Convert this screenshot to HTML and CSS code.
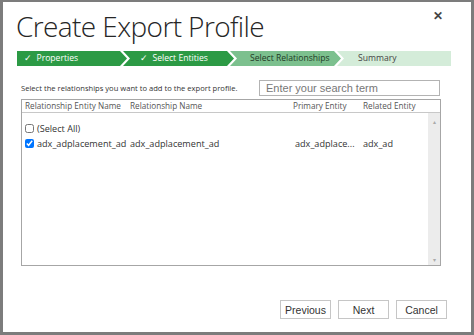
FILE: index.html
```html
<!DOCTYPE html>
<html lang="en">
<head>
    <meta charset="UTF-8">
    <title>Create Export Profile</title>
    <link rel="stylesheet" href="styles.css">
</head>
<body>
    <div class="dialog">
        <div class="header">
            <h1>Create Export Profile</h1>
            <span class="close">&#x2715;</span>
        </div>

        <!-- wizard steps -->
        <div class="steps">
            <div class="step done first">&#x2713;&nbsp; Properties</div>
            <div class="step done">&#x2713;&nbsp; Select Entities</div>
            <div class="step current">Select Relationships</div>
            <div class="step todo last">Summary</div>
        </div>

        <div class="toolbar">
            <p class="hint">Select the relationships you want to add to the export profile.</p>
            <input class="search" type="text" placeholder="Enter your search term">
        </div>

        <div class="grid">
            <div class="grid-head">
                <span class="col c1">Relationship Entity Name</span>
                <span class="col c2">Relationship Name</span>
                <span class="col c3">Primary Entity</span>
                <span class="col c4">Related Entity</span>
            </div>
            <div class="grid-body">
                <div class="rows">
                    <label class="row">
                        <input type="checkbox">
                        <span class="col">(Select All)</span>
                    </label>
                    <label class="row">
                        <input type="checkbox" checked>
                        <span class="col c1">adx_adplacement_ad</span>
                        <span class="col c2">adx_adplacement_ad</span>
                        <span class="col c3">adx_adplace...</span>
                        <span class="col c4">adx_ad</span>
                    </label>
                </div>
                <div class="scrollbar">
                    <span class="arrow">&#x25B4;</span>
                    <span class="arrow">&#x25BE;</span>
                </div>
            </div>
        </div>

        <div class="buttons">
            <button>Previous</button>
            <button>Next</button>
            <button>Cancel</button>
        </div>
    </div>
</body>
</html>
```

FILE: styles.css
```css
* {
    box-sizing: border-box;
}

body {
    margin: 0;
    padding: 0;
    font-family: "Open Sans", "Noto Sans", sans-serif;
    color: #333;
}

.dialog {
    width: 474px;
    height: 335px;
    background-color: #fff;
    border: 3px solid #7c7c7c;
    border-top-width: 2px;
    display: flex;
    flex-direction: column;
}

/* title */
.header {
    display: flex;
    justify-content: space-between;
    align-items: flex-start;
    padding: 0 28px 0 13px;
}

.header h1 {
    margin: 4px 0 0 0;
    font-size: 28px;
    line-height: 40px;
    font-weight: 300;
    color: #262626;
    letter-spacing: -0.6px;
}

.close {
    margin-top: 5px;
    font-size: 12px;
    font-weight: bold;
    color: #444;
}

/* wizard steps */
.steps {
    display: flex;
    margin: 5px 0 0 14px;
    width: 434px;
    height: 15px;
}

.step {
    height: 15px;
    line-height: 15px;
    font-size: 8.6px;
    color: #fff;
    padding-left: 17px;
    margin-left: -4px;
    white-space: nowrap;
    clip-path: polygon(0 0, calc(100% - 7px) 0, 100% 50%, calc(100% - 7px) 100%, 0 100%, 7px 50%);
}

.step.first {
    margin-left: 0;
    padding-left: 7px;
    width: 110px;
    clip-path: polygon(0 0, calc(100% - 7px) 0, 100% 50%, calc(100% - 7px) 100%, 0 100%);
}

.step.done {
    background-color: #2c9a45;
}

.step.done:nth-child(2) {
    width: 111px;
}

.step.current {
    width: 111px;
    padding-left: 20px;
    background-color: #7cc08e;
    color: #1f3a26;
}

.step.todo {
    flex: 1;
    padding-left: 21px;
    background-color: #d4ecd9;
    color: #444;
    clip-path: polygon(0 0, 100% 0, 100% 100%, 0 100%, 7px 50%);
}

/* hint + search */
.toolbar {
    display: flex;
    justify-content: space-between;
    align-items: center;
    margin: 14px 31px 0 18px;
}

.hint {
    margin: 0;
    font-size: 7.6px;
    color: #333;
}

.search {
    width: 181px;
    height: 16px;
    border: 1px solid #b3b3b3;
    padding: 0 6px;
    font-family: "Liberation Sans", Arial, sans-serif;
    font-size: 11px;
}

.search::placeholder {
    color: #777;
}

/* grid */
.grid {
    margin: 3px 30px 0 18px;
    height: 167px;
    border: 1px solid #a6a6a6;
    display: flex;
    flex-direction: column;
}

.grid-head {
    display: flex;
    height: 13px;
    line-height: 12px;
    font-size: 8.2px;
    color: #555;
    border-bottom: 1px solid #c8c8c8;
    padding-left: 3px;
}

.col {
    white-space: nowrap;
}

.c1 {
    width: 105px;
}

.c2 {
    width: 163px;
}

.c3 {
    width: 70px;
}

.grid-body {
    flex: 1;
    display: flex;
}

.rows {
    flex: 1;
    padding-top: 9px;
}

.row {
    display: flex;
    align-items: center;
    height: 13px;
    margin-bottom: 2px;
    font-size: 9.1px;
    color: #333;
    padding-left: 3px;
}

.row input {
    width: 9px;
    height: 9px;
    margin: 0 3px 0 0;
}

.row .c1 {
    width: 93px;
}

.row .c2 {
    width: 165px;
}

.row .c3 {
    width: 68px;
}

.scrollbar {
    width: 12px;
    background-color: #ececec;
    display: flex;
    flex-direction: column;
    justify-content: space-between;
    align-items: center;
    padding: 5px 0 1px;
}

.arrow {
    font-size: 6px;
    color: #aaa;
}

/* buttons */
.buttons {
    display: flex;
    justify-content: flex-end;
    gap: 7px;
    margin: 34px 24px 0 0;
}

.buttons button {
    width: 51px;
    height: 19px;
    padding: 0;
    background-color: #fff;
    border: 1px solid #c6c6c6;
    font-family: "Liberation Sans", Arial, sans-serif;
    font-size: 10.5px;
    color: #333;
}
```
